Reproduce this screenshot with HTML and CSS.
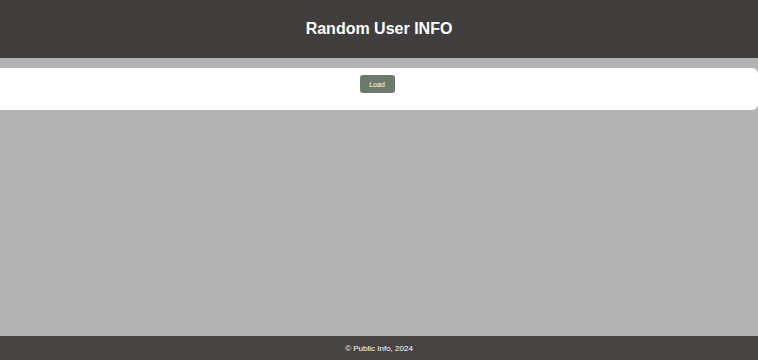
FILE: index.html
```html
<!DOCTYPE html>
<html lang="en">
<head>
    <meta charset="UTF-8">
    <meta name="viewport" content="width=device-width, initial-scale=1.0">
    <title>Random User INFO</title>
    <link rel="stylesheet" href="styles.css">
</head>
<body>
    <header class="top">
        <h1>Random User INFO</h1>
    </header>

    <main class="content">
        <div class="card">
            <button type="button" class="load-btn">Load</button>
        </div>
    </main>

    <footer class="bottom">
        <p>&copy; Public Info, 2024</p>
    </footer>
</body>
</html>
```

FILE: styles.css
```css
body {
    font-family: 'Liberation Sans', Arial, sans-serif;
    margin: 0;
    padding: 0;
    height: 100vh;
    display: flex;
    flex-direction: column;
    background-color: #b3b3b3;
    overflow: hidden;
}

.top {
    background-color: #403e3c;
    height: 58px;
    display: flex;
    align-items: center;
    justify-content: center;
}

.top h1 {
    margin: 0;
    color: #fff;
    font-size: 16px;
    font-weight: 700;
}

.content {
    flex: 1;
    padding-top: 10px;
}

.card {
    background: #fff;
    height: 42px;
    margin-left: -10px;
    border-radius: 6px;
    display: flex;
    justify-content: center;
    align-items: flex-start;
    padding-top: 7px;
    box-sizing: border-box;
}

.load-btn {
    background-color: #6b7a6b;
    color: #fff;
    border: none;
    border-radius: 3px;
    width: 35px;
    height: 18px;
    padding: 0;
    margin-left: 6px;
    font-family: 'Liberation Sans', Arial, sans-serif;
    font-size: 7px;
    cursor: pointer;
}

.bottom {
    background-color: #474444;
    height: 24px;
    display: flex;
    align-items: center;
    justify-content: center;
}

.bottom p {
    margin: 0;
    color: #fff;
    font-size: 8px;
}
```
